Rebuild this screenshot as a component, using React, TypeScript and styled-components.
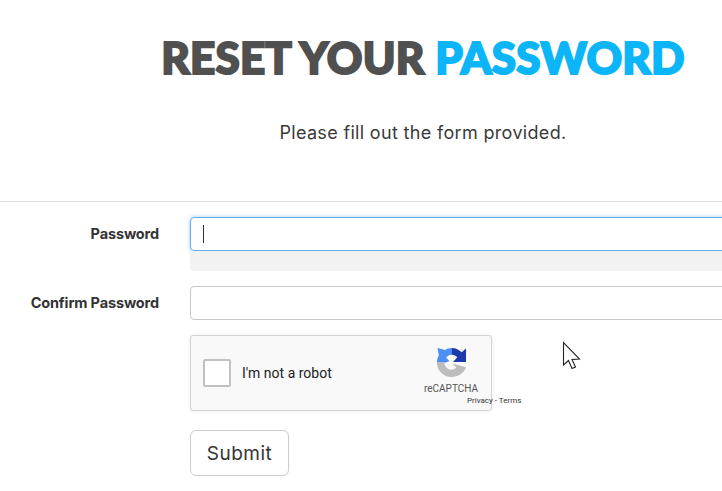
import React from 'react';
import styled, { createGlobalStyle } from 'styled-components';

const GlobalStyle = createGlobalStyle`
    html, body {
        margin: 0;
        overflow: hidden;
        background: #fff;
    }
    * {
        box-sizing: border-box;
    }
`

const App = () => {
    return (
        <Page>
            <GlobalStyle />
            <Header>
                <Title>RESET YOUR <em>PASSWORD</em></Title>
                <Lead>Please fill out the form provided.</Lead>
            </Header>
            <Form>
                <Row>
                    <Label>Password</Label>
                    <Field>
                        <Input $focused>
                            <Caret />
                        </Input>
                        <Hint />
                    </Field>
                </Row>
                <Row>
                    <Label>Confirm Password</Label>
                    <Field>
                        <Input />
                    </Field>
                </Row>
                <CaptchaRow>
                    <Label />
                    <Field>
                        <Captcha>
                            <CheckBox />
                            <CaptchaText>I'm not a robot</CaptchaText>
                            <CaptchaBrand>
                                <CaptchaLogo />
                                <span>reCAPTCHA</span>
                            </CaptchaBrand>
                            <CaptchaLinks>Privacy - Terms</CaptchaLinks>
                        </Captcha>
                    </Field>
                </CaptchaRow>
                <Row>
                    <Label />
                    <Field>
                        <SubmitButton type="button">Submit</SubmitButton>
                    </Field>
                </Row>
            </Form>
            <Pointer />
        </Page>
    );
};

export default App;

const CaptchaLogo = () => (
    <LogoSvg width="31" height="31" viewBox="0 0 32 32">
        <path d="M1 16 C1 13 1.800 10.500 3 8.500 L1.500 1 L9.500 3 C11.500 1.700 13.700 1 16 1 L16 8 C13.800 8 11.800 9.300 10.500 11 L14 14.500 L10 16 Z" fill="#4a90f5" />
        <path d="M16 1 C20.500 1 24 3 26.500 5.500 L31 1.500 L31 15.500 L17.500 15.500 L22 10.500 C20.500 9 18.500 8 16 8 Z" fill="#1c3aa9" />
        <path d="M1 16 L10 16 L8.500 17 C9.500 20.500 12.500 23.500 16 23.500 C18 23.500 19.500 22.500 21 21.500 L17 17 L31 21 C29 27 23 31 16 31 C7.500 31 1 24.500 1 16 Z" fill="#bdbdbd" />
    </LogoSvg>
);

const Pointer = () => (
    <PointerWrap width="20" height="30" viewBox="0 0 20 30">
        <path d="M1.500 1.500 L1.500 24 L6.500 19.500 L10 27.500 L13.500 26 L10 18.500 L17.500 18 Z" fill="#fff" stroke="#222" strokeWidth="1.100" />
    </PointerWrap>
);

const Page = styled.div`
    color: #333;
    font-family: "Inter", "Liberation Sans", sans-serif;
    height: 491px;
    overflow: hidden;
    position: relative;
    width: 722px;
`
const Header = styled.div`
    border-bottom: 1px solid #ddd;
    height: 202px;
    padding-top: 30px;
    text-align: center;
    width: 846px;
`
const Title = styled.h1`
    color: #505050;
    font-family: "Lato", "Liberation Sans", sans-serif;
    font-size: 44px;
    font-weight: 900;
    -webkit-text-stroke: 2px currentColor;
    letter-spacing: 0.2px;
    line-height: 54px;
    margin: 0;
    white-space: nowrap;
    em {
        color: #0bb5f7;
        font-style: normal;
    }
`
const Lead = styled.p`
    color: #3a3a3a;
    font-size: 18px;
    letter-spacing: 0.33px;
    line-height: 24px;
    margin: 37px 0 0;
`
const Form = styled.div`
    display: flex;
    flex-direction: column;
    padding-top: 15px;
    width: 846px;
`
const Row = styled.div`
    display: flex;
    gap: 31px;
    margin-bottom: 15px;
`
const CaptchaRow = styled(Row)`
    margin-bottom: 19px;
`
const Label = styled.label`
    color: #333;
    flex: 0 0 159px;
    font-size: 14.5px;
    font-weight: 700;
    letter-spacing: -0.15px;
    line-height: 34px;
    text-align: right;
`
const Field = styled.div`
    flex: 1;
`
const Input = styled.div<{ $focused?: boolean }>`
    align-items: center;
    background: #fff;
    border: 1px solid ${(props) => props.$focused ? '#66afe9' : '#c8c8c8'};
    border-radius: 4px;
    box-shadow: ${(props) => props.$focused ? '0 0 4px rgba(102,175,233,.6)' : 'none'};
    display: flex;
    height: 34px;
    padding-left: 12px;
`
const Caret = styled.span`
    background: #333;
    display: block;
    height: 18px;
    width: 1px;
`
const Hint = styled.div`
    background: #f2f2f2;
    border-radius: 0 0 4px 4px;
    height: 20px;
`
const Captcha = styled.div`
    align-items: center;
    background: #f9f9f9;
    border: 1px solid #d3d3d3;
    border-radius: 3px;
    box-shadow: 0 0 4px rgba(0,0,0,.08);
    display: flex;
    height: 76px;
    padding: 0 12px;
    position: relative;
    width: 302px;
`
const CheckBox = styled.div`
    background: #fff;
    border: 2px solid #c1c1c1;
    border-radius: 2px;
    flex: none;
    height: 28px;
    width: 28px;
`
const CaptchaText = styled.span`
    color: #222;
    flex: 1;
    font-family: "Roboto", "Liberation Sans", sans-serif;
    font-size: 14px;
    margin-left: 11px;
`
const CaptchaBrand = styled.div`
    align-items: center;
    color: #555;
    display: flex;
    flex-direction: column;
    font-family: "Roboto", "Liberation Sans", sans-serif;
    font-size: 10px;
    gap: 5px;
    line-height: 12px;
    margin: 0 1px 4px 0;
`
const LogoSvg = styled.svg`
    display: block;
    margin-left: 2px;
`
const CaptchaLinks = styled.span`
    color: #333;
    font-family: "Roboto", "Liberation Sans", sans-serif;
    font-size: 8px;
    left: 276px;
    position: absolute;
    top: 60px;
    white-space: nowrap;
`
const SubmitButton = styled.button`
    background: #fff;
    border: 1px solid #ccc;
    border-radius: 6px;
    color: #333;
    font-family: "Inter", "Liberation Sans", sans-serif;
    font-size: 19px;
    height: 46px;
    letter-spacing: 0.5px;
    padding: 0;
    width: 99px;
`
const PointerWrap = styled.svg`
    left: 562px;
    position: absolute;
    top: 341px;
`
